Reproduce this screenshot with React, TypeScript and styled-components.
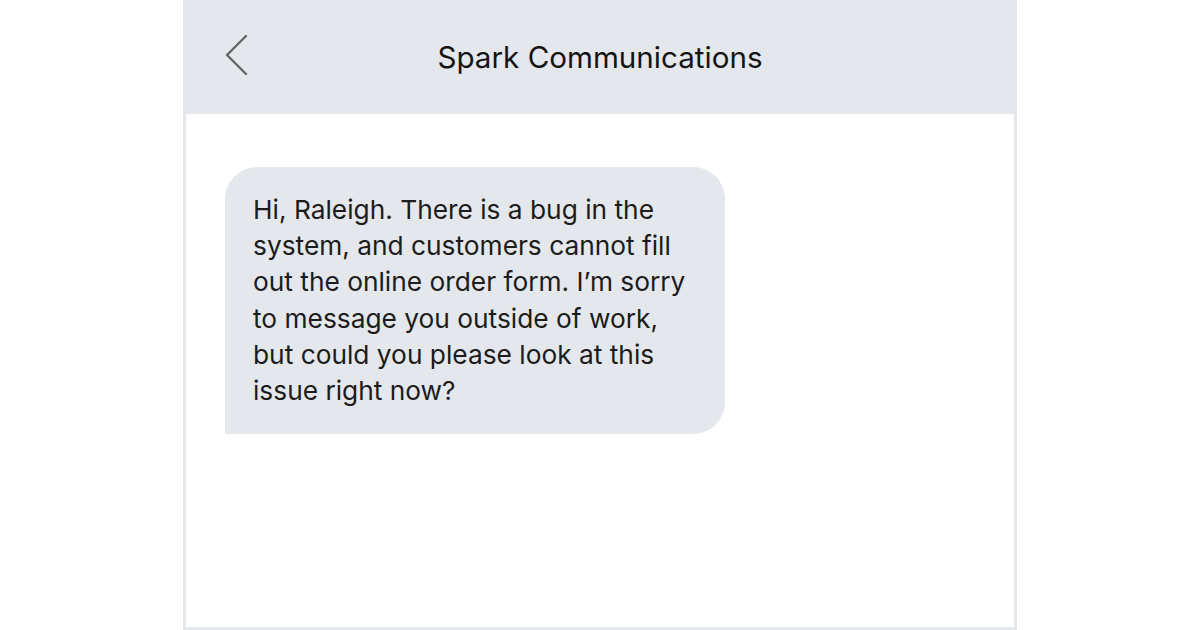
import React from 'react';
import styled, { createGlobalStyle } from 'styled-components';

const GlobalStyle = createGlobalStyle`
  html, body {
    margin: 0;
    padding: 0;
    background: #ffffff;
  }
  body {
    font-family: 'Inter', 'Roboto', 'Liberation Sans', sans-serif;
  }
`;

const Page = styled.div`
  width: 100%;
  height: 630px;
  display: flex;
  justify-content: center;
  overflow: hidden;
`;

const Phone = styled.div`
  width: 834px;
  height: 630px;
  box-sizing: border-box;
  border: 3px solid #e4e7eb;
  border-top: none;
  display: flex;
  flex-direction: column;
  background: #ffffff;
`;

const Header = styled.div`
  position: relative;
  height: 114px;
  margin: 0 -3px;
  background: #e4e7eb;
  display: flex;
  align-items: center;
  justify-content: center;
`;

const BackButton = styled.div`
  position: absolute;
  left: 40px;
  top: 32px;
  width: 30px;
  height: 46px;
  display: flex;
  align-items: center;
`;

const Title = styled.h1`
  margin: 0;
  font-size: 29.6px;
  font-weight: 400;
  color: #141414;
`;

const Thread = styled.div`
  flex: 1;
  padding: 53px 0 0 39px;
  display: flex;
  flex-direction: column;
  align-items: flex-start;
`;

const Bubble = styled.div`
  width: 500px;
  box-sizing: border-box;
  padding: 25px 16px 25px 28px;
  background: #e4e7eb;
  border-radius: 32px 32px 32px 0;
  font-size: 26.3px;
  line-height: 36.2px;
  color: #1c1c1c;
`;

const lines = [
  'Hi, Raleigh. There is a bug in the',
  'system, and customers cannot fill',
  'out the online order form. I\u2019m sorry',
  'to message you outside of work,',
  'but could you please look at this',
  'issue right now?',
];

const App: React.FC = () => {
  return (
    <>
      <GlobalStyle />
      <Page>
        <Phone>
          <Header>
            <BackButton>
              <svg width="28" height="46" viewBox="0 0 28 46" fill="none">
                <path
                  d="M23 4 L4 23 L23 42"
                  stroke="#606367"
                  strokeWidth="2.3"
                  strokeLinecap="round"
                  strokeLinejoin="round"
                />
              </svg>
            </BackButton>
            <Title>Spark Communications</Title>
          </Header>
          <Thread>
            <Bubble>
              {lines.map((line, i) => (
                <React.Fragment key={i}>
                  {line}
                  {i < lines.length - 1 && <br />}
                </React.Fragment>
              ))}
            </Bubble>
          </Thread>
        </Phone>
      </Page>
    </>
  );
};

export default App;
